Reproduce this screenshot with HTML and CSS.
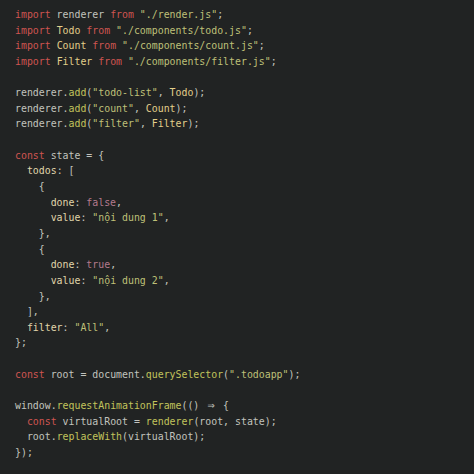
FILE: index.html
```html
<!DOCTYPE html>
<html lang="vi">
<head>
<meta charset="utf-8">
<title>main.js</title>
<link rel="stylesheet" href="styles.css">
</head>
<body>
<pre class="code"><code><span class="k">import</span> renderer <span class="k">from</span> <span class="s">"./render.js"</span>;
<span class="k">import</span> <span class="c">Todo</span> <span class="k">from</span> <span class="s">"./components/todo.js"</span>;
<span class="k">import</span> <span class="c">Count</span> <span class="k">from</span> <span class="s">"./components/count.js"</span>;
<span class="k">import</span> <span class="c">Filter</span> <span class="k">from</span> <span class="s">"./components/filter.js"</span>;

renderer.<span class="f">add</span>(<span class="s">"todo-list"</span>, <span class="c">Todo</span>);
renderer.<span class="f">add</span>(<span class="s">"count"</span>, <span class="c">Count</span>);
renderer.<span class="f">add</span>(<span class="s">"filter"</span>, <span class="c">Filter</span>);

<span class="k">const</span> state = {
  <span class="p">todos</span>: [
    {
      <span class="p">done</span>: <span class="b">false</span>,
      <span class="p">value</span>: <span class="s">"nội dung 1"</span>,
    },
    {
      <span class="p">done</span>: <span class="b">true</span>,
      <span class="p">value</span>: <span class="s">"nội dung 2"</span>,
    },
  ],
  <span class="p">filter</span>: <span class="s">"All"</span>,
};

<span class="k">const</span> root = document.<span class="f">querySelector</span>(<span class="s">".todoapp"</span>);

window.<span class="f">requestAnimationFrame</span>(() <span class="arrow"><span class="arrow-glyph">⇒</span></span> {
  <span class="k">const</span> virtualRoot = <span class="f">renderer</span>(root, state);
  root.<span class="f">replaceWith</span>(virtualRoot);
});</code></pre>
</body>
</html>
```

FILE: styles.css
```css
html, body {
  margin: 0;
  padding: 0;
  background: #212323;
  height: 100%;
}

body {
  padding: 7px 15px 0;
  box-sizing: border-box;
}

.code {
  margin: 0;
  font-family: "DejaVu Sans Mono", "Liberation Mono", monospace;
  font-size: 9.9px;
  line-height: 15.64px;
  color: #c2c3be;
  white-space: pre;
}

.k { color: #cf5551; }
.s { color: #bfc078; }
.f { color: #c2c35c; }
.c { color: #e3cf8b; }
.p { color: #e0d6ab; }
.b { color: #b47a8d; }

.arrow {
  display: inline-block;
  width: 2ch;
  text-align: center;
  line-height: 1;
}

.arrow-glyph {
  font-size: 12px;
}
```
